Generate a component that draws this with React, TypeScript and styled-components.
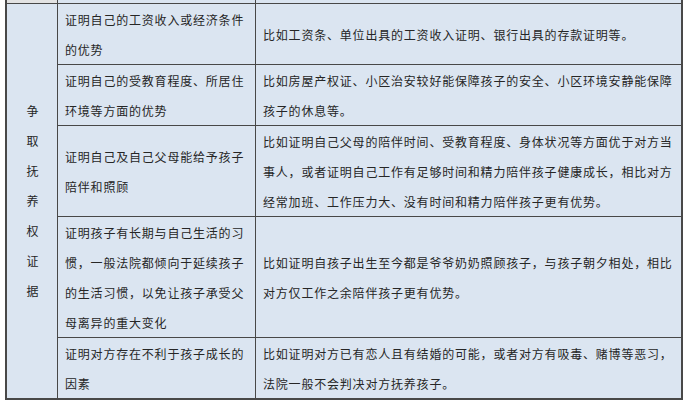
import React from 'react';
import styled, {createGlobalStyle} from "styled-components";

const GlobalStyle = createGlobalStyle`
  html, body {
    margin: 0;
    padding: 0;
    background: #ffffff;
  }
`

type RowType = {
    point: string[]
    example: string[]
}

const rows: RowType[] = [
    {
        point: ['证明自己的工资收入或经济条件', '的优势'],
        example: ['比如工资条、单位出具的工资收入证明、银行出具的存款证明等。'],
    },
    {
        point: ['证明自己的受教育程度、所居住', '环境等方面的优势'],
        example: ['比如房屋产权证、小区治安较好能保障孩子的安全、小区环境安静能保障', '孩子的休息等。'],
    },
    {
        point: ['证明自己及自己父母能给予孩子', '陪伴和照顾'],
        example: [
            '比如证明自己父母的陪伴时间、受教育程度、身体状况等方面优于对方当',
            '事人，或者证明自己工作有足够时间和精力陪伴孩子健康成长，相比对方',
            '经常加班、工作压力大、没有时间和精力陪伴孩子更有优势。',
        ],
    },
    {
        point: ['证明孩子有长期与自己生活的习', '惯，一般法院都倾向于延续孩子', '的生活习惯，以免让孩子承受父', '母离异的重大变化'],
        example: ['比如证明自孩子出生至今都是爷爷奶奶照顾孩子，与孩子朝夕相处，相比', '对方仅工作之余陪伴孩子更有优势。'],
    },
    {
        point: ['证明对方存在不利于孩子成长的', '因素'],
        example: ['比如证明对方已有恋人且有结婚的可能，或者对方有吸毒、赌博等恶习，', '法院一般不会判决对方抚养孩子。'],
    },
]

const title = '争取抚养权证据'

export default function App() {
    return (
        <>
            <GlobalStyle/>
            <Page>
                <Table>
                    <EdgeCell $tone="grey"/>
                    <EdgeCell/>
                    <EdgeCell/>
                    <TitleCell>
                        {title.split('').map((ch, i) => <TitleChar key={i}>{ch}</TitleChar>)}
                    </TitleCell>
                    {rows.map((row, i) => (
                        <React.Fragment key={i}>
                            <Cell $row={i + 2}>
                                <div>{row.point.map((l, j) => <Line key={j}>{l}</Line>)}</div>
                            </Cell>
                            <Cell $row={i + 2}>
                                <div>{row.example.map((l, j) => <Line key={j}>{l}</Line>)}</div>
                            </Cell>
                        </React.Fragment>
                    ))}
                </Table>
            </Page>
        </>
    );
}

const Page = styled.div`
  width: 688px;
  height: 400px;
  overflow: hidden;
  padding-left: 5px;
  box-sizing: border-box;
`

const Table = styled.div`
  display: grid;
  grid-template-columns: 50px 197px 425px;
  grid-template-rows: 3px 60px 60px 90px 120px 60px;
  gap: 1px;
  width: max-content;
  background: #484848;
  border: 2px solid #484848;
  border-top: none;
  font-family: "Noto Sans CJK SC", "Noto Sans", sans-serif;
  font-size: 12px;
  letter-spacing: 0.8px;
  color: #262626;
`

const EdgeCell = styled.div<{ $tone?: 'grey' }>`
  background: ${p => p.$tone === 'grey' ? '#e3e3e3' : '#dbe5f1'};
`

const TitleCell = styled.div`
  grid-column: 1;
  grid-row: 2 / 7;
  background: #dbe5f1;
  display: flex;
  flex-direction: column;
  align-items: center;
  justify-content: center;
  padding-left: 2px;
`

const TitleChar = styled.span`
  display: block;
  line-height: 30px;
`

const Cell = styled.div<{ $row: number }>`
  grid-row: ${p => p.$row};
  background: #dbe5f1;
  display: flex;
  align-items: center;
  padding: 2px 4px 0 7px;
  overflow: hidden;
`

const Line = styled.span`
  display: block;
  line-height: 30px;
  white-space: nowrap;
`
